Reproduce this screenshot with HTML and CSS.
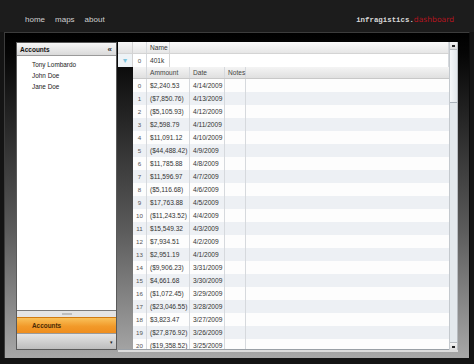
FILE: index.html
```html
<!DOCTYPE html>
<html lang="en">
<head>
  <meta charset="UTF-8" />
  <title>infragistics.dashboard</title>
  <link rel="stylesheet" href="styles.css">
</head>
<body>
  <header class="top">
    <nav class="nav">
      <a href="#">home</a>
      <a href="#">maps</a>
      <a href="#">about</a>
    </nav>
    <div class="brand"><span class="brand-a">infragistics.</span><span class="brand-b">dashboard</span></div>
  </header>

  <main class="frame">
    <aside class="accounts">
      <div class="pane-head">
        <span>Accounts</span>
        <span class="collapse">&laquo;</span>
      </div>
      <ul class="pane-list">
        <li>Tony Lombardo</li>
        <li>John Doe</li>
        <li>Jane Doe</li>
      </ul>
      <div class="splitter"><span class="grip"></span></div>
      <div class="tab-active">Accounts</div>
      <div class="tab-foot"><span class="drop">&#9662;</span></div>
    </aside>

    <section class="grid">
      <div class="grid-main">
        <div class="parent parent-head">
          <span class="exp"></span>
          <span class="num"></span>
          <span class="cell name">Name</span>
          <span class="cell"></span>
        </div>
        <div class="parent parent-row">
          <span class="exp"><span class="arrow">&#9662;</span></span>
          <span class="num">0</span>
          <span class="cell name">401k</span>
          <span class="cell"></span>
        </div>

        <div class="band">
          <div class="row band-head">
            <span class="num"></span>
            <span class="cell">Ammount</span>
            <span class="cell">Date</span>
            <span class="cell">Notes</span>
            <span class="cell fill"></span>
          </div>
          <div class="row"><span class="num">0</span><span class="cell">$2,240.53</span><span class="cell">4/14/2009</span><span class="cell"></span><span class="cell fill"></span></div>
          <div class="row"><span class="num">1</span><span class="cell">($7,850.76)</span><span class="cell">4/13/2009</span><span class="cell"></span><span class="cell fill"></span></div>
          <div class="row"><span class="num">2</span><span class="cell">($5,105.93)</span><span class="cell">4/12/2009</span><span class="cell"></span><span class="cell fill"></span></div>
          <div class="row"><span class="num">3</span><span class="cell">$2,598.79</span><span class="cell">4/11/2009</span><span class="cell"></span><span class="cell fill"></span></div>
          <div class="row"><span class="num">4</span><span class="cell">$11,091.12</span><span class="cell">4/10/2009</span><span class="cell"></span><span class="cell fill"></span></div>
          <div class="row"><span class="num">5</span><span class="cell">($44,488.42)</span><span class="cell">4/9/2009</span><span class="cell"></span><span class="cell fill"></span></div>
          <div class="row"><span class="num">6</span><span class="cell">$11,785.88</span><span class="cell">4/8/2009</span><span class="cell"></span><span class="cell fill"></span></div>
          <div class="row"><span class="num">7</span><span class="cell">$11,596.97</span><span class="cell">4/7/2009</span><span class="cell"></span><span class="cell fill"></span></div>
          <div class="row"><span class="num">8</span><span class="cell">($5,116.68)</span><span class="cell">4/6/2009</span><span class="cell"></span><span class="cell fill"></span></div>
          <div class="row"><span class="num">9</span><span class="cell">$17,763.88</span><span class="cell">4/5/2009</span><span class="cell"></span><span class="cell fill"></span></div>
          <div class="row"><span class="num">10</span><span class="cell">($11,243.52)</span><span class="cell">4/4/2009</span><span class="cell"></span><span class="cell fill"></span></div>
          <div class="row"><span class="num">11</span><span class="cell">$15,549.32</span><span class="cell">4/3/2009</span><span class="cell"></span><span class="cell fill"></span></div>
          <div class="row"><span class="num">12</span><span class="cell">$7,934.51</span><span class="cell">4/2/2009</span><span class="cell"></span><span class="cell fill"></span></div>
          <div class="row"><span class="num">13</span><span class="cell">$2,951.19</span><span class="cell">4/1/2009</span><span class="cell"></span><span class="cell fill"></span></div>
          <div class="row"><span class="num">14</span><span class="cell">($9,906.23)</span><span class="cell">3/31/2009</span><span class="cell"></span><span class="cell fill"></span></div>
          <div class="row"><span class="num">15</span><span class="cell">$4,661.68</span><span class="cell">3/30/2009</span><span class="cell"></span><span class="cell fill"></span></div>
          <div class="row"><span class="num">16</span><span class="cell">($1,072.45)</span><span class="cell">3/29/2009</span><span class="cell"></span><span class="cell fill"></span></div>
          <div class="row"><span class="num">17</span><span class="cell">($23,046.55)</span><span class="cell">3/28/2009</span><span class="cell"></span><span class="cell fill"></span></div>
          <div class="row"><span class="num">18</span><span class="cell">$3,823.47</span><span class="cell">3/27/2009</span><span class="cell"></span><span class="cell fill"></span></div>
          <div class="row"><span class="num">19</span><span class="cell">($27,876.92)</span><span class="cell">3/26/2009</span><span class="cell"></span><span class="cell fill"></span></div>
          <div class="row"><span class="num">20</span><span class="cell">($19,358.52)</span><span class="cell">3/25/2009</span><span class="cell"></span><span class="cell fill"></span></div>
        </div>
      </div>

      <div class="scrollbar">
        <div class="sb-btn"><span class="dot"></span></div>
        <div class="sb-thumb"></div>
        <div class="sb-track"></div>
        <div class="sb-btn"><span class="dot"></span></div>
      </div>
    </section>
  </main>
</body>
</html>
```

FILE: styles.css
```css
* {
  box-sizing: border-box;
}
body {
  margin: 0;
  width: 474px;
  height: 364px;
  overflow: hidden;
  background: #141414;
  font-family: 'Liberation Sans', Arial, sans-serif;
}
.top {
  height: 32px;
  background: #1c1c1c;
  display: flex;
  justify-content: space-between;
  padding: 15px 20px 0 25px;
}
.nav {
  display: flex;
  gap: 10px;
  line-height: 10px;
}
.nav a {
  color: #d0d0d0;
  font-size: 8px;
  text-decoration: none;
}
.brand {
  line-height: 10px;
  font-size: 7.4px;
}
.brand-a {
  font-family: 'Liberation Mono', monospace;
  font-weight: bold;
  color: #d8d8d8;
}
.brand-b {
  font-family: 'DejaVu Sans', sans-serif;
  font-size: 7.6px;
  color: #b3141f;
}

/* main frame */
.frame {
  margin: 0 4px;
  height: 326px;
  border: 1px solid #3c3c3c;
  border-bottom: none;
  border-right-color: #0c0c0c;
  background: linear-gradient(#000 0%, #050505 6%, #5a5a5a 60%, #a8a8a8 100%);
  padding: 9px 11px 0 11px;
  display: flex;
  gap: 1px;
  align-items: flex-start;
}

/* accounts pane */
.accounts {
  width: 101px;
  height: 308px;
  display: flex;
  flex-direction: column;
  border: 1px solid #5a5a5a;
  background: #cfcfcf;
}
.pane-head {
  height: 13px;
  display: flex;
  justify-content: space-between;
  align-items: center;
  padding: 0 4px 0 3px;
  background: linear-gradient(#f7f7f7, #d9d9d9);
  border-bottom: 1px solid #9a9a9a;
  font-size: 6.5px;
  font-weight: bold;
  color: #111;
}
.collapse {
  font-size: 8px;
  color: #333;
}
.pane-list {
  flex: 1;
  margin: 0;
  padding: 3px 0 0 15px;
  list-style: none;
  background: #fff;
  border-bottom: 1px solid #7a7a7a;
}
.pane-list li {
  font-size: 6.4px;
  color: #222;
  height: 11px;
  line-height: 11px;
}
.splitter {
  height: 6px;
  display: flex;
  justify-content: center;
  align-items: center;
  background: #e4e4e4;
}
.grip {
  width: 10px;
  height: 2px;
  background: #bdbdbd;
}
.tab-active {
  height: 16px;
  line-height: 16px;
  padding-left: 15px;
  background: linear-gradient(#f9c15a, #f29a2a 55%, #ef8d1d);
  border-top: 1px solid #d07a10;
  font-size: 6.4px;
  font-weight: bold;
  color: #4a2a05;
}
.tab-foot {
  height: 16px;
  background: linear-gradient(#e4e4e4, #bdbdbd);
  border-top: 1px solid #9a9a9a;
  display: flex;
  justify-content: flex-end;
  align-items: center;
  padding-right: 3px;
}
.drop {
  font-size: 5px;
  color: #222;
}

/* data grid */
.grid {
  width: 340px;
  height: 310px;
  display: flex;
  border-bottom: 2px solid #dcdcdc;
}
.grid-main {
  flex: 1;
  overflow: hidden;
  font-size: 6.6px;
  color: #333;
  border-bottom: 1px solid #9aa0a6;
}
.parent {
  display: grid;
  grid-template-columns: 15px 14px 23px 1fr;
}
.parent-head {
  height: 12px;
  background: linear-gradient(#fafafa, #e6e6e6);
  border-bottom: 1px solid #d4d4d4;
}
.parent-row {
  height: 13px;
  background: #fff;
}
.exp {
  background: linear-gradient(#f6f6f6, #e2e2e2);
  border-right: 1px solid #d2d2d2;
  display: flex;
  justify-content: center;
  align-items: center;
}
.parent-row .exp {
  background: #eef3f6;
}
.arrow {
  color: #7cc4dd;
  font-size: 8px;
  line-height: 8px;
}
.num {
  border-right: 1px solid #d6d9dd;
  display: flex;
  justify-content: center;
  align-items: center;
  color: #555;
  font-size: 6.2px;
}
.cell {
  display: flex;
  align-items: center;
  padding-left: 3px;
  border-right: 1px solid #d6d9dd;
  white-space: nowrap;
}
.cell.fill {
  border-right: none;
}
.name {
  border-right: 1px solid #d6d6d6;
}
.band {
  margin-left: 15px;
}
.row {
  display: grid;
  grid-template-columns: 14px 43px 35px 21px 1fr;
  height: 13px;
  background: #fdfdfd;
}
.row:nth-child(odd) {
  background: #edf0f4;
}
.band-head.row {
  height: 12px;
  background: linear-gradient(#f4f4f4, #e0e0e0);
  border-bottom: 1px solid #c8c8c8;
  color: #444;
}

/* scrollbar */
.scrollbar {
  width: 9px;
  display: flex;
  flex-direction: column;
  background: #e8ecef;
  border-left: 1px solid #c4c9ce;
  border-right: 1px solid #b8bcc0;
}
.sb-btn {
  height: 8px;
  display: flex;
  justify-content: center;
  align-items: center;
  background: linear-gradient(#f4f4f4, #dcdcdc);
  border-bottom: 1px solid #b8bcc0;
}
.sb-btn:last-child {
  border-top: 1px solid #b8bcc0;
  border-bottom: none;
}
.dot {
  width: 3px;
  height: 2px;
  background: #222;
}
.sb-thumb {
  height: 53px;
  background: linear-gradient(90deg, #f6f8fa, #e3e8ec);
  border-bottom: 1px solid #aab2ba;
}
.sb-track {
  flex: 1;
  background: #e4e9ed;
}
```
